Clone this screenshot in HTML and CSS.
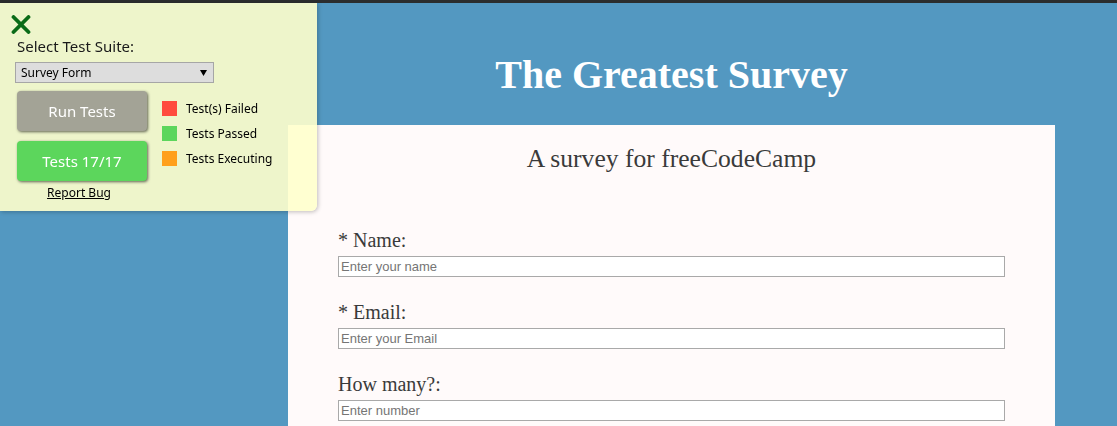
FILE: index.html
```html
<!DOCTYPE html>
<html lang="en">
<head>
<meta charset="utf-8">
<title>The Greatest Survey</title>
<link rel="stylesheet" href="styles.css">
</head>
<body>
<div class="page">
  <h1 class="title">The Greatest Survey</h1>
  <div class="card">
    <p class="subtitle">A survey for freeCodeCamp</p>
    <form class="form">
      <div class="group">
        <label class="label" for="name">* Name:</label>
        <input class="field" id="name" type="text" placeholder="Enter your name">
      </div>
      <div class="group">
        <label class="label" for="email">* Email:</label>
        <input class="field" id="email" type="email" placeholder="Enter your Email">
      </div>
      <div class="group">
        <label class="label" for="number">How many?:</label>
        <input class="field" id="number" type="text" placeholder="Enter number">
      </div>
    </form>
  </div>
</div>

<div class="panel">
  <svg class="close" width="20" height="19" viewBox="0 0 20 19">
    <line x1="2.5" y1="2" x2="17.5" y2="17" stroke="#0a6b17" stroke-width="3.8" stroke-linecap="round"/>
    <line x1="17.5" y1="2" x2="2.5" y2="17" stroke="#0a6b17" stroke-width="3.8" stroke-linecap="round"/>
  </svg>
  <div class="suite-label">Select Test Suite:</div>
  <div class="select">
    <span>Survey Form</span>
    <svg width="7" height="6" viewBox="0 0 7 6"><polygon points="0,0 7,0 3.5,6" fill="#000"/></svg>
  </div>
  <div class="row">
    <div class="buttons">
      <div class="btn btn-run">Run Tests</div>
      <div class="btn btn-pass">Tests 17/17</div>
      <a class="report" href="#">Report Bug</a>
    </div>
    <ul class="legend">
      <li class="legend-item"><span class="swatch swatch-fail"></span>Test(s) Failed</li>
      <li class="legend-item"><span class="swatch swatch-pass"></span>Tests Passed</li>
      <li class="legend-item"><span class="swatch swatch-exec"></span>Tests Executing</li>
    </ul>
  </div>
</div>
</body>
</html>
```
FILE: styles.css
```css
html, body {
  margin: 0;
  padding: 0;
}

body {
  background: #5398c1;
  border-top: 3px solid #2b2d2e;
  font-family: "Liberation Serif", "Times New Roman", serif;
  height: 423px;
  overflow: hidden;
}

.page {
  margin-left: 288px;
  width: 767px;
}

.title {
  margin: 0;
  padding-top: 49px;
  margin-bottom: 27px;
  text-align: center;
  color: #ffffff;
  font-size: 40px;
  line-height: 46px;
  font-weight: bold;
}

.card {
  background: #fffafa;
  padding: 19px 50px 40px;
}

.subtitle {
  margin: 0;
  text-align: center;
  font-size: 25.6px;
  line-height: 29px;
  color: #3a3a3a;
}

.form {
  margin-top: 56px;
}

.group {
  margin-bottom: 24px;
}

.label {
  display: block;
  font-size: 20px;
  line-height: 23px;
  color: #3a3a3a;
  margin-bottom: 4px;
}

.field {
  display: block;
  box-sizing: border-box;
  width: 100%;
  height: 21px;
  margin: 0;
  padding: 0 2px;
  border: 1px solid #a9a9a9;
  background: #ffffff;
  font-family: "Liberation Sans", Arial, sans-serif;
  font-size: 13px;
  color: #333;
  outline: none;
}

.field::placeholder {
  color: #757575;
}

/* Test panel overlay */
.panel {
  position: fixed;
  top: 3px;
  left: 0;
  width: 317px;
  height: 208px;
  box-sizing: border-box;
  padding: 12px 15px 0;
  display: flex;
  flex-direction: column;
  align-items: flex-start;
  background: rgba(255, 255, 204, 0.9);
  border-bottom-right-radius: 6px;
  box-shadow: 1px 1px 4px rgba(0, 0, 0, 0.25);
  font-family: "Noto Sans", "Open Sans", sans-serif;
  color: #1a1a1a;
}

.close {
  display: block;
  margin-left: -4px;
}

.suite-label {
  margin-top: 2px;
  margin-left: 2px;
  font-size: 15px;
  line-height: 20px;
}

.select {
  margin-top: 6px;
  box-sizing: border-box;
  width: 199px;
  height: 21px;
  padding: 0 6px 0 5px;
  display: flex;
  align-items: center;
  justify-content: space-between;
  background: #dddddd;
  border: 1px solid #a6a6a6;
  font-size: 12px;
  color: #000;
}

.row {
  margin-top: 8px;
  margin-left: 2px;
  display: flex;
  align-items: flex-start;
}

.buttons {
  display: flex;
  flex-direction: column;
  align-items: center;
  width: 130px;
}

.btn {
  box-sizing: border-box;
  width: 130px;
  height: 40px;
  display: flex;
  align-items: center;
  justify-content: center;
  border-radius: 4px;
  color: #ffffff;
  font-size: 15px;
  box-shadow: 1px 1px 3px rgba(0, 0, 0, 0.6);
}

.btn-run {
  background: #a3a396;
}

.btn-pass {
  margin-top: 10px;
  background: #5cd65c;
}

.report {
  margin-top: 4px;
  padding-right: 6px;
  font-size: 12px;
  line-height: 16px;
  color: #000;
  text-decoration: underline;
}

.legend {
  list-style: none;
  margin: 0 0 0 15px;
  padding: 10px 0 0;
  display: flex;
  flex-direction: column;
  gap: 10px;
}

.legend-item {
  display: flex;
  align-items: center;
  height: 15px;
  font-size: 12px;
  color: #000;
}

.swatch {
  width: 15px;
  height: 15px;
  margin-right: 9px;
  flex: none;
}

.swatch-fail { background: #ff4b3e; }
.swatch-pass { background: #5cd65c; }
.swatch-exec { background: #ffa01c; }
```
